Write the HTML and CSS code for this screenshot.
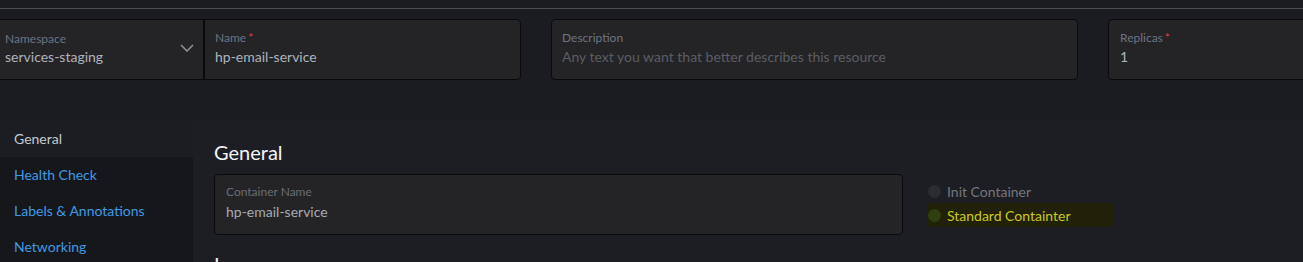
FILE: index.html
```html
<!DOCTYPE html>
<html lang="en">

<head>
    <meta charset="UTF-8">
    <title>Edit Deployment</title>
    <link rel="stylesheet" href="styles.css">
</head>

<body>
    <!-- Barra superior con la línea -->
    <div class="topbar"></div>

    <!-- Campos principales -->
    <div class="fields">
        <div class="field-group">
            <div class="field field-select">
                <div class="field-text">
                    <label class="field-label">Namespace</label>
                    <div class="field-value">services-staging</div>
                </div>
                <svg class="chevron" width="14" height="8" viewBox="0 0 14 8">
                    <path d="M1 1 L7 7 L13 1" fill="none" stroke="#8a8f9a" stroke-width="1.6" />
                </svg>
            </div>
            <div class="field field-name">
                <label class="field-label">Name<span class="req">*</span></label>
                <div class="field-value">hp-email-service</div>
            </div>
        </div>
        <div class="field field-desc">
            <label class="field-label">Description</label>
            <div class="field-value placeholder">Any text you want that better describes this resource</div>
        </div>
        <div class="field field-replicas">
            <label class="field-label">Replicas<span class="req">*</span></label>
            <div class="field-value">1</div>
        </div>
    </div>

    <!-- Editor: menú lateral y contenido -->
    <div class="editor">
        <ul class="side-nav">
            <li class="active">General</li>
            <li>Health Check</li>
            <li>Labels &amp; Annotations</li>
            <li>Networking</li>
        </ul>

        <div class="main">
            <h2>General</h2>
            <div class="row">
                <div class="field field-container">
                    <label class="field-label muted">Container Name</label>
                    <div class="field-value muted">hp-email-service</div>
                </div>
                <div class="radios">
                    <div class="radio">
                        <span class="dot"></span>Init Container
                    </div>
                    <div class="radio checked">
                        <span class="dot"></span>Standard Containter
                    </div>
                </div>
            </div>
            <h2>Image</h2>
        </div>
    </div>
</body>

</html>
```

FILE: styles.css
```css
/* Reseteo básico */
* {
    margin: 0;
    padding: 0;
    box-sizing: border-box;
}

body {
    font-family: Lato, "Open Sans", sans-serif;
    background-color: #1b1c21;
    width: 1303px;
    height: 262px;
    overflow: hidden;
}

/* Línea superior */
.topbar {
    height: 9px;
    border-bottom: 1px solid #4b4c52;
}

/* Fila de campos */
.fields {
    display: flex;
    gap: 30px;
    padding-top: 10px;
    margin-left: -5px;
    width: 1500px;
}

.field-group {
    display: flex;
}

/* Caja de input */
.field {
    height: 61px;
    background-color: #242427;
    border: 1px solid #0a0a0c;
    border-radius: 4px;
    padding: 10px 10px 0;
}

.field-label {
    display: block;
    font-size: 12px;
    line-height: 15px;
    color: #6d7384;
}

.req {
    color: #e5383b;
    margin-left: 2px;
}

.field-value {
    margin-top: 3px;
    font-size: 14px;
    line-height: 18px;
    color: #aeb3bd;
}

.field-value.placeholder {
    color: #5b5d63;
}

.field-select {
    width: 209px;
    display: flex;
    justify-content: space-between;
    align-items: flex-start;
    padding-right: 9px;
    border-radius: 0;
    border-left: none;
}

.field-select .field-label {
    margin-top: 1px;
}

.field-select .field-value {
    margin-top: 2px;
}

.chevron {
    margin-top: 14px;
}

.field-name {
    width: 317px;
    border-top-left-radius: 0;
    border-bottom-left-radius: 0;
}

.field-desc {
    width: 527px;
}

.field-replicas {
    width: 317px;
    padding-left: 11px;
}

/* Editor */
.editor {
    display: flex;
    margin-top: 39px;
    height: 200px;
}

.side-nav {
    list-style: none;
    width: 193px;
    margin-top: 1px;
    background-color: #16171b;
}

.side-nav li {
    height: 36px;
    line-height: 36px;
    padding-left: 14px;
    font-size: 14px;
    color: #3f9ae6;
}

.side-nav li.active {
    height: 37px;
    line-height: 38px;
    background-color: #1c1d22;
    color: #c6c9d1;
}

.main {
    flex: 1;
    background-color: #1d1e23;
    padding: 21px 0 0 21px;
}

.main h2 {
    font-size: 20px;
    font-weight: 400;
    line-height: 24px;
    color: #f2f3f5;
}

.row {
    display: flex;
    align-items: flex-start;
    gap: 25px;
    margin: 10px 0 17px;
}

.field-container {
    width: 689px;
    padding: 9px 11px 0;
}

.field-label.muted {
    color: #6a6d75;
}

.field-value.muted {
    margin-top: 4px;
    color: #a7aab1;
}

/* Radios */
.radios {
    display: flex;
    flex-direction: column;
    padding-top: 5px;
}

.radio {
    display: flex;
    align-items: center;
    gap: 6px;
    height: 24px;
    font-size: 14px;
    color: #74777e;
}

.dot {
    width: 13px;
    height: 13px;
    border-radius: 50%;
    background-color: #2b2c31;
}

.radio.checked {
    color: #c9c91a;
    background-color: #212109;
    width: 186px;
    margin-left: -1px;
    padding-left: 1px;
    border-radius: 3px;
}

.radio.checked .dot {
    background-color: #2f3f0f;
}
```
